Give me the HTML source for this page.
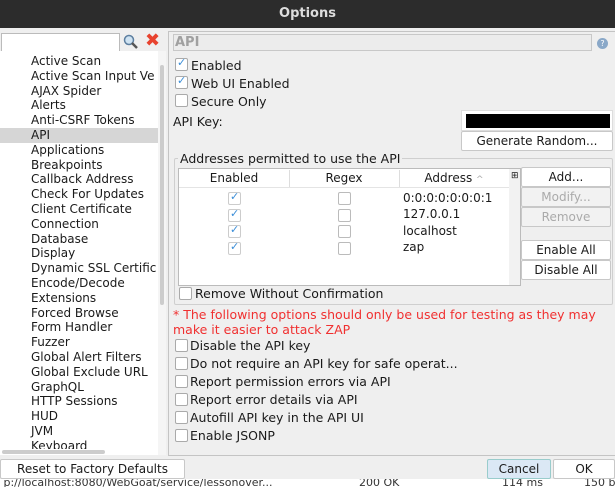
<!DOCTYPE html><html><head><style>
*{box-sizing:border-box;margin:0;padding:0}
body{width:615px;height:487px;overflow:hidden;background:#efefef;font-family:"DejaVu Sans","Liberation Sans",sans-serif;font-size:12px;color:#1a1a1a;position:relative}
.a{position:absolute;white-space:nowrap}
.title{left:0;top:0;width:615px;height:28px;background:#2c2c2c;color:#ddd;font-weight:bold;font-size:13px;text-align:center;line-height:28px}
.tree{left:0;top:51px;width:158px;height:404px;background:#fff;overflow:hidden;padding-top:3px}
.tree div{height:14.8px;line-height:14.8px;padding-left:31px}
.sel{background:#d6d6d6}
.cb{position:absolute;width:13px;height:13px;border:1px solid #aaa;border-radius:2px;background:#fff}
.ck::after{content:"✓";position:absolute;left:1px;top:-3px;font-size:11px;color:#3b8ed8}
.btn{position:absolute;background:#fff;border:1px solid #c8c8c8;border-radius:2px;text-align:center;line-height:18px;font-size:12px}
.dis{color:#aaa;background:#f2f2f2}
</style></head><body>
<div class="a title">Options</div>
<div class="a" style="left:1px;top:33px;width:119px;height:19px;background:#fff;border:1px solid #bbb"></div>
<svg class="a" style="left:122px;top:34px" width="18" height="16"><circle cx="7" cy="6" r="4.5" fill="#cfe3f2" stroke="#5d7fa0" stroke-width="1.5"/><line x1="10" y1="9" x2="15" y2="14" stroke="#555" stroke-width="2.5"/></svg>
<div class="a" style="left:145px;top:30px;color:#e8432f;font-size:18px;font-weight:bold">✖</div>
<div class="a tree">
<div>Active Scan</div><div>Active Scan Input Ve</div><div>AJAX Spider</div><div>Alerts</div><div>Anti-CSRF Tokens</div><div class="sel">API</div><div>Applications</div><div>Breakpoints</div><div>Callback Address</div><div>Check For Updates</div><div>Client Certificate</div><div>Connection</div><div>Database</div><div>Display</div><div>Dynamic SSL Certific</div><div>Encode/Decode</div><div>Extensions</div><div>Forced Browse</div><div>Form Handler</div><div>Fuzzer</div><div>Global Alert Filters</div><div>Global Exclude URL</div><div>GraphQL</div><div>HTTP Sessions</div><div>HUD</div><div>JVM</div><div>Keyboard</div></div>
<div class="a" style="left:0;top:449px;width:158px;height:6px;background:#fff"></div>
<div class="a" style="left:2px;top:450px;width:103px;height:4px;background:#ccc;border-radius:2px"></div>
<div class="a" style="left:158px;top:51px;width:8px;height:404px;background:#f5f5f5"></div>
<div class="a" style="left:160px;top:65px;width:4px;height:240px;background:#ccc;border-radius:2px"></div>
<div class="a" style="left:168px;top:31px;width:447px;height:425px;border:1px solid #c4c4c4;border-right:none"></div>
<div class="a" style="left:173px;top:34px;width:419px;height:17px;border:1px solid #c8c8c8;background:#ececec;color:#a0a0a0;font-weight:bold;font-size:13px;line-height:15px;padding-left:1px">API</div>
<div class="a" style="left:597px;top:38px;width:11px;height:11px;border-radius:50%;background:#8aa8c8;color:#fff;font-size:8px;text-align:center;line-height:11px">?</div>
<div class="cb ck" style="left:175px;top:58px"></div><div class="a" style="left:191px;top:58px;font-size:12.5px">Enabled</div>
<div class="cb ck" style="left:175px;top:76px"></div><div class="a" style="left:191px;top:76px;font-size:12.5px">Web UI Enabled</div>
<div class="cb" style="left:175px;top:94px"></div><div class="a" style="left:191px;top:94px;font-size:12.5px">Secure Only</div>
<div class="a" style="left:173px;top:114px;font-size:12.5px">API Key:</div>
<div class="a" style="left:461px;top:110px;width:152px;height:21px;background:#fff;border:1px solid #ddd"></div>
<div class="a" style="left:466px;top:114px;width:144px;height:14px;background:#000"></div>
<div class="btn" style="left:461px;top:131px;width:152px;height:20px">Generate Random...</div>
<div class="a" style="left:174px;top:158px;width:439px;height:147px;border:1px solid #cfcfcf;border-radius:2px"></div>
<div class="a" style="left:178px;top:151px;background:#efefef;padding:0 2px;font-size:12.5px">Addresses permitted to use the API</div>
<div class="a" style="left:178px;top:168px;width:343px;height:118px;background:#fff;border:1px solid #bbb"></div>
<div class="a" style="left:179px;top:169px;width:330px;height:19px;border-bottom:1px solid #e4e4e4"></div>
<div class="a" style="left:289px;top:170px;width:1px;height:17px;background:#ddd"></div>
<div class="a" style="left:399px;top:170px;width:1px;height:17px;background:#ddd"></div>
<div class="a" style="left:179px;top:171px;width:110px;text-align:center">Enabled</div>
<div class="a" style="left:289px;top:171px;width:110px;text-align:center">Regex</div>
<div class="a" style="left:399px;top:171px;width:110px;text-align:center">Address <span style="color:#aaa;font-size:9px">^</span></div>
<div class="a" style="left:509px;top:169px;width:11px;height:116px;background:#f2f2f2"></div>
<div class="a" style="left:511px;top:171px;font-size:9px">⊞</div>
<div class="cb ck" style="left:228px;top:192px;border-color:#ccc"></div><div class="cb" style="left:338px;top:192px;border-color:#bbb"></div><div class="a" style="left:403px;top:191px">0:0:0:0:0:0:0:1</div>
<div class="cb ck" style="left:228px;top:209px;border-color:#ccc"></div><div class="cb" style="left:338px;top:209px;border-color:#bbb"></div><div class="a" style="left:403px;top:207px">127.0.0.1</div>
<div class="cb ck" style="left:228px;top:225px;border-color:#ccc"></div><div class="cb" style="left:338px;top:225px;border-color:#bbb"></div><div class="a" style="left:403px;top:224px">localhost</div>
<div class="cb ck" style="left:228px;top:242px;border-color:#ccc"></div><div class="cb" style="left:338px;top:242px;border-color:#bbb"></div><div class="a" style="left:403px;top:240px">zap</div>
<div class="btn" style="left:521px;top:167px;width:90px;height:20px">Add...</div>
<div class="btn dis" style="left:521px;top:187px;width:90px;height:20px">Modify...</div>
<div class="btn dis" style="left:521px;top:207px;width:90px;height:20px">Remove</div>
<div class="btn" style="left:521px;top:240px;width:90px;height:20px">Enable All</div>
<div class="btn" style="left:521px;top:260px;width:90px;height:20px">Disable All</div>
<div class="cb" style="left:179px;top:287px"></div><div class="a" style="left:195px;top:286px;font-size:12.5px">Remove Without Confirmation</div>
<div class="a" style="left:173px;top:307px;color:#f03030;font-size:12.5px;line-height:15px">* The following options should only be used for testing as they may<br>make it easier to attack ZAP</div>
<div class="cb" style="left:175px;top:339px"></div><div class="a" style="left:190px;top:338px;font-size:12.5px">Disable the API key</div>
<div class="cb" style="left:175px;top:357px"></div><div class="a" style="left:190px;top:356px;font-size:12.5px">Do not require an API key for safe operat...</div>
<div class="cb" style="left:175px;top:375px"></div><div class="a" style="left:190px;top:374px;font-size:12.5px">Report permission errors via API</div>
<div class="cb" style="left:175px;top:393px"></div><div class="a" style="left:190px;top:392px;font-size:12.5px">Report error details via API</div>
<div class="cb" style="left:175px;top:411px"></div><div class="a" style="left:190px;top:410px;font-size:12.5px">Autofill API key in the API UI</div>
<div class="cb" style="left:175px;top:429px"></div><div class="a" style="left:190px;top:428px;font-size:12.5px">Enable JSONP</div>
<div class="btn" style="left:0;top:459px;width:185px;height:20px">Reset to Factory Defaults</div>
<div class="btn" style="left:487px;top:459px;width:64px;height:20px;background:#dbe8f5;border-color:#9cc">Cancel</div>
<div class="btn" style="left:553px;top:459px;width:62px;height:20px">OK</div>
<div class="a" style="left:0;top:479px;width:615px;height:8px;background:#fff;overflow:hidden;font-size:11px;line-height:8px;color:#333">&nbsp;p://localhost:8080/WebGoat/service/lessonover...<span style="position:absolute;left:359px">200 OK</span><span style="position:absolute;left:502px">114 ms</span><span style="position:absolute;left:584px">150 byt</span></div>
</body></html>
